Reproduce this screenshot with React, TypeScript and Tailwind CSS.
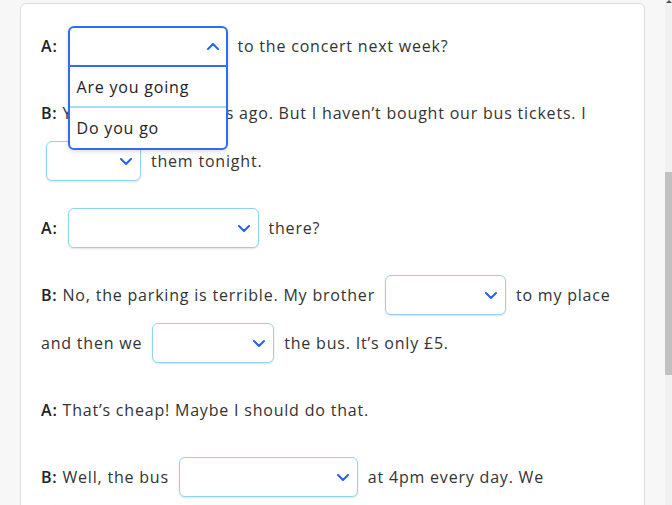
import React from "react";

function Chevron({ up = false }: { up?: boolean }) {
  return (
    <svg width="12" height="7" viewBox="0 0 12 7" fill="none" className="shrink-0">
      <path
        d={up ? "M1 6l5-5 5 5" : "M1 1l5 5 5-5"}
        stroke="#2563eb"
        strokeWidth="2"
        strokeLinecap="round"
        strokeLinejoin="round"
      />
    </svg>
  );
}

function Gap({ width }: { width: string }) {
  return (
    <span
      className={`inline-flex align-top my-1 mx-[5px] h-10 ${width} items-center justify-end pr-[8px] rounded-md border border-[#8fd4f2] bg-white shadow-[0_1px_2px_rgba(0,0,0,0.12)]`}
    >
      <Chevron />
    </span>
  );
}

function OpenGap({ width, options }: { width: string; options: string[] }) {
  return (
    <span className={`relative inline-block align-top my-1 mx-[5px] h-10 ${width}`}>
      <span className="absolute left-0 top-0 z-10 w-full rounded-md border-2 border-[#2d6cf5] bg-white leading-normal shadow-[0_2px_4px_rgba(0,0,0,0.12)]">
        <span className="flex h-[39px] items-center justify-end pr-[7px] border-b-2 border-[#2d6cf5]">
          <Chevron up />
        </span>
        {options.map((o, i) => (
          <span
            key={o}
            className={`flex items-center px-[7px] text-[#222] ${
              i < options.length - 1 ? "h-[41px] border-b-2 border-[#a9ddf3]" : "h-[40px]"
            }`}
          >
            {o}
          </span>
        ))}
      </span>
    </span>
  );
}

export default function App() {
  return (
    <div
      className="flex h-[505px] w-[672px] overflow-hidden bg-[#f7f7f7] text-[16px] tracking-[0.8px] text-[#333]"
      style={{ fontFamily: '"Open Sans", sans-serif' }}
    >
      <div className="flex-1 px-[20px] pt-[3px]">
        <div className="h-[560px] rounded-md border border-[#dcdcdc] bg-white px-[20px] pt-[18px]">
          <p className="leading-[48px] mb-[19px]">
            <b className="font-semibold text-[#222]">A:</b>{" "}
            <OpenGap width="w-[160px]" options={["Are you going", "Do you go"]} /> to the concert next
            week?
          </p>
          <p className="leading-[48px] mb-[19px]">
            <b className="font-semibold text-[#222]">B:</b> Yes, I got ours weeks ago. But I
            haven’t bought our bus tickets. I <Gap width="w-[95px]" /> them tonight.
          </p>
          <p className="leading-[48px] mb-[19px]">
            <b className="font-semibold text-[#222]">A:</b> <Gap width="w-[191px]" /> there?
          </p>
          <p className="leading-[48px] mb-[19px]">
            <b className="font-semibold text-[#222]">B:</b> No, the parking is terrible. My brother{" "}
            <Gap width="w-[121px]" /> to my place and then we <Gap width="w-[122px]" /> the bus. It’s
            only £5.
          </p>
          <p className="leading-[48px] mb-[19px]">
            <b className="font-semibold text-[#222]">A:</b> That’s cheap! Maybe I should do that.
          </p>
          <p className="leading-[48px] mb-[19px]">
            <b className="font-semibold text-[#222]">B:</b> Well, the bus <Gap width="w-[179px]" /> at
            4pm every day. We <Gap width="w-[121px]" /> the 4.15 bus.
          </p>
        </div>
      </div>
      <div className="flex w-[7px] flex-col bg-[#f1f1f1]">
        <div className="h-[172px]">
          <div className="mx-auto h-0 w-0 border-x-[3px] border-b-[3px] border-x-transparent border-b-[#505050]" />
        </div>
        <div className="h-[203px] bg-[#c1c1c1]" />
      </div>
    </div>
  );
}
